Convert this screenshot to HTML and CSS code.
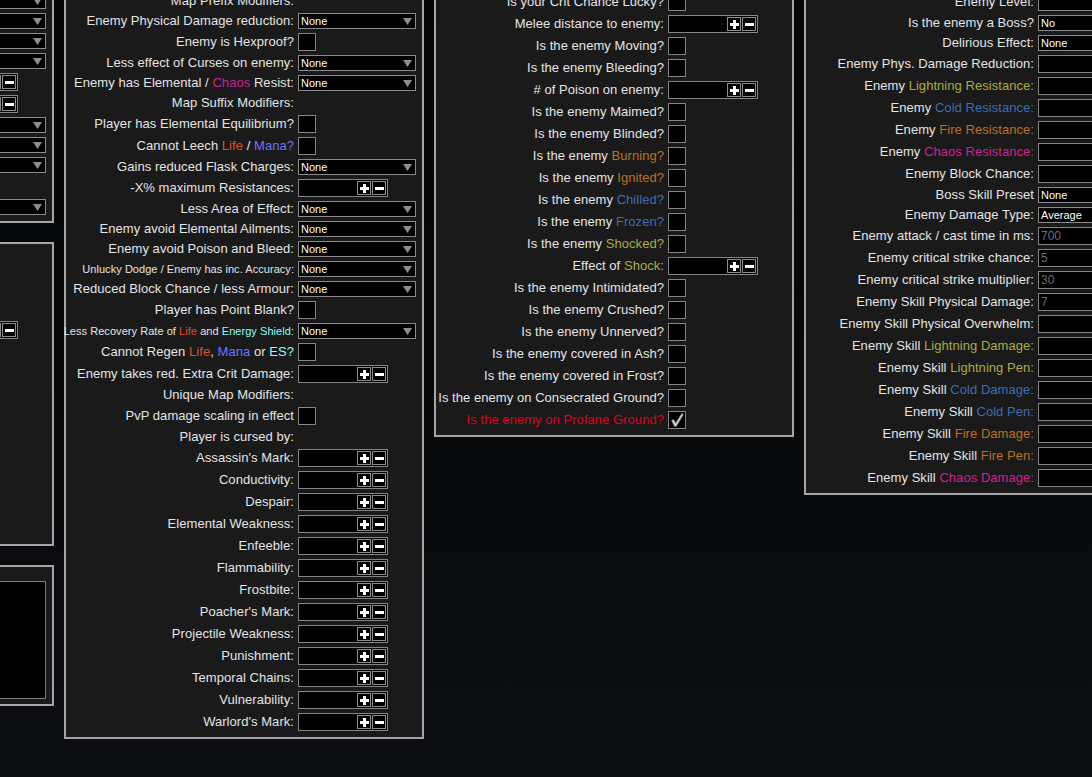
FILE: index.html
```html
<!DOCTYPE html>
<html>
<head>
<meta charset="utf-8">
<link rel="stylesheet" href="styles.css">
</head>
<body>
<div class="board">

  <!-- left column (mostly scrolled off to the left) -->
  <div class="col">
    <div class="panel">
      <div class="row"><div class="lab"></div><div class="dd"><span class="v"></span><svg class="arr" width="9" height="7"><path d="M0 0H9L4.5 7Z"/></svg></div></div>
      <div class="row"><div class="lab"></div><div class="dd"><span class="v"></span><svg class="arr" width="9" height="7"><path d="M0 0H9L4.5 7Z"/></svg></div></div>
      <div class="row"><div class="lab"></div><div class="dd"><span class="v"></span><svg class="arr" width="9" height="7"><path d="M0 0H9L4.5 7Z"/></svg></div></div>
      <div class="row"><div class="lab"></div><div class="dd"><span class="v"></span><svg class="arr" width="9" height="7"><path d="M0 0H9L4.5 7Z"/></svg></div></div>
      <div class="row"><div class="lab"></div><div class="ed"><span class="ph"></span><span class="pm"><svg width="9" height="9"><path d="M3 0h3v3h3v3H6v3H3V6H0V3h3z"/></svg></span><span class="pm"><svg width="9" height="9"><path d="M0 3h9v3H0z"/></svg></span></div></div>
      <div class="row"><div class="lab"></div><div class="ed"><span class="ph"></span><span class="pm"><svg width="9" height="9"><path d="M3 0h3v3h3v3H6v3H3V6H0V3h3z"/></svg></span><span class="pm"><svg width="9" height="9"><path d="M0 3h9v3H0z"/></svg></span></div></div>
      <div class="row"><div class="lab"></div><div class="dd"><span class="v"></span><svg class="arr" width="9" height="7"><path d="M0 0H9L4.5 7Z"/></svg></div></div>
      <div class="row"><div class="lab"></div><div class="dd"><span class="v"></span><svg class="arr" width="9" height="7"><path d="M0 0H9L4.5 7Z"/></svg></div></div>
      <div class="row"><div class="lab"></div><div class="dd"><span class="v"></span><svg class="arr" width="9" height="7"><path d="M0 0H9L4.5 7Z"/></svg></div></div>
      <div class="row"><div class="lab"></div><div class="cb"></div></div>
      <div class="row"><div class="lab"></div><div class="dd"><span class="v"></span><svg class="arr" width="9" height="7"><path d="M0 0H9L4.5 7Z"/></svg></div></div>
    </div>
    <div class="panel p2">
      <div class="row"><div class="lab"></div><div class="ed"><span class="ph"></span><span class="pm"><svg width="9" height="9"><path d="M3 0h3v3h3v3H6v3H3V6H0V3h3z"/></svg></span><span class="pm"><svg width="9" height="9"><path d="M0 3h9v3H0z"/></svg></span></div></div>
    </div>
    <div class="panel p3">
      <div class="listbox"></div>
    </div>
  </div>

  <!-- map modifiers / curses -->
  <div class="col">
    <div class="panel">
      <div class="row"><div class="lab"><span>Map Prefix Modifiers:</span></div></div>
      <div class="row"><div class="lab"><span>Enemy Physical Damage reduction:</span></div><div class="dd"><span class="v">None</span><svg class="arr" width="9" height="7"><path d="M0 0H9L4.5 7Z"/></svg></div></div>
      <div class="row"><div class="lab"><span>Enemy is Hexproof?</span></div><div class="cb"></div></div>
      <div class="row"><div class="lab"><span>Less effect of Curses on enemy:</span></div><div class="dd"><span class="v">None</span><svg class="arr" width="9" height="7"><path d="M0 0H9L4.5 7Z"/></svg></div></div>
      <div class="row"><div class="lab"><span>Enemy has Elemental / <span class="chaos">Chaos</span> Resist:</span></div><div class="dd"><span class="v">None</span><svg class="arr" width="9" height="7"><path d="M0 0H9L4.5 7Z"/></svg></div></div>
      <div class="row"><div class="lab"><span>Map Suffix Modifiers:</span></div></div>
      <div class="row"><div class="lab"><span>Player has Elemental Equilibrium?</span></div><div class="cb"></div></div>
      <div class="row"><div class="lab"><span>Cannot Leech <span class="life">Life</span> / <span class="mana">Mana?</span></span></div><div class="cb"></div></div>
      <div class="row"><div class="lab"><span>Gains reduced Flask Charges:</span></div><div class="dd"><span class="v">None</span><svg class="arr" width="9" height="7"><path d="M0 0H9L4.5 7Z"/></svg></div></div>
      <div class="row"><div class="lab"><span>-X% maximum Resistances:</span></div><div class="ed"><span class="ph"></span><span class="pm"><svg width="9" height="9"><path d="M3 0h3v3h3v3H6v3H3V6H0V3h3z"/></svg></span><span class="pm"><svg width="9" height="9"><path d="M0 3h9v3H0z"/></svg></span></div></div>
      <div class="row"><div class="lab"><span>Less Area of Effect:</span></div><div class="dd"><span class="v">None</span><svg class="arr" width="9" height="7"><path d="M0 0H9L4.5 7Z"/></svg></div></div>
      <div class="row"><div class="lab"><span>Enemy avoid Elemental Ailments:</span></div><div class="dd"><span class="v">None</span><svg class="arr" width="9" height="7"><path d="M0 0H9L4.5 7Z"/></svg></div></div>
      <div class="row"><div class="lab"><span>Enemy avoid Poison and Bleed:</span></div><div class="dd"><span class="v">None</span><svg class="arr" width="9" height="7"><path d="M0 0H9L4.5 7Z"/></svg></div></div>
      <div class="row"><div class="lab small"><span>Unlucky Dodge / Enemy has inc. Accuracy:</span></div><div class="dd"><span class="v">None</span><svg class="arr" width="9" height="7"><path d="M0 0H9L4.5 7Z"/></svg></div></div>
      <div class="row"><div class="lab"><span>Reduced Block Chance / less Armour:</span></div><div class="dd"><span class="v">None</span><svg class="arr" width="9" height="7"><path d="M0 0H9L4.5 7Z"/></svg></div></div>
      <div class="row"><div class="lab"><span>Player has Point Blank?</span></div><div class="cb"></div></div>
      <div class="row"><div class="lab small"><span>Less Recovery Rate of <span class="life">Life</span> and <span class="es">Energy Shield:</span></span></div><div class="dd"><span class="v">None</span><svg class="arr" width="9" height="7"><path d="M0 0H9L4.5 7Z"/></svg></div></div>
      <div class="row"><div class="lab"><span>Cannot Regen <span class="life">Life</span>, <span class="mana">Mana</span> or <span class="es">ES?</span></span></div><div class="cb"></div></div>
      <div class="row"><div class="lab"><span>Enemy takes red. Extra Crit Damage:</span></div><div class="ed"><span class="ph"></span><span class="pm"><svg width="9" height="9"><path d="M3 0h3v3h3v3H6v3H3V6H0V3h3z"/></svg></span><span class="pm"><svg width="9" height="9"><path d="M0 3h9v3H0z"/></svg></span></div></div>
      <div class="row"><div class="lab"><span>Unique Map Modifiers:</span></div></div>
      <div class="row"><div class="lab"><span>PvP damage scaling in effect</span></div><div class="cb"></div></div>
      <div class="row"><div class="lab"><span>Player is cursed by:</span></div></div>
      <div class="row"><div class="lab"><span>Assassin's Mark:</span></div><div class="ed"><span class="ph"></span><span class="pm"><svg width="9" height="9"><path d="M3 0h3v3h3v3H6v3H3V6H0V3h3z"/></svg></span><span class="pm"><svg width="9" height="9"><path d="M0 3h9v3H0z"/></svg></span></div></div>
      <div class="row"><div class="lab"><span>Conductivity:</span></div><div class="ed"><span class="ph"></span><span class="pm"><svg width="9" height="9"><path d="M3 0h3v3h3v3H6v3H3V6H0V3h3z"/></svg></span><span class="pm"><svg width="9" height="9"><path d="M0 3h9v3H0z"/></svg></span></div></div>
      <div class="row"><div class="lab"><span>Despair:</span></div><div class="ed"><span class="ph"></span><span class="pm"><svg width="9" height="9"><path d="M3 0h3v3h3v3H6v3H3V6H0V3h3z"/></svg></span><span class="pm"><svg width="9" height="9"><path d="M0 3h9v3H0z"/></svg></span></div></div>
      <div class="row"><div class="lab"><span>Elemental Weakness:</span></div><div class="ed"><span class="ph"></span><span class="pm"><svg width="9" height="9"><path d="M3 0h3v3h3v3H6v3H3V6H0V3h3z"/></svg></span><span class="pm"><svg width="9" height="9"><path d="M0 3h9v3H0z"/></svg></span></div></div>
      <div class="row"><div class="lab"><span>Enfeeble:</span></div><div class="ed"><span class="ph"></span><span class="pm"><svg width="9" height="9"><path d="M3 0h3v3h3v3H6v3H3V6H0V3h3z"/></svg></span><span class="pm"><svg width="9" height="9"><path d="M0 3h9v3H0z"/></svg></span></div></div>
      <div class="row"><div class="lab"><span>Flammability:</span></div><div class="ed"><span class="ph"></span><span class="pm"><svg width="9" height="9"><path d="M3 0h3v3h3v3H6v3H3V6H0V3h3z"/></svg></span><span class="pm"><svg width="9" height="9"><path d="M0 3h9v3H0z"/></svg></span></div></div>
      <div class="row"><div class="lab"><span>Frostbite:</span></div><div class="ed"><span class="ph"></span><span class="pm"><svg width="9" height="9"><path d="M3 0h3v3h3v3H6v3H3V6H0V3h3z"/></svg></span><span class="pm"><svg width="9" height="9"><path d="M0 3h9v3H0z"/></svg></span></div></div>
      <div class="row"><div class="lab"><span>Poacher's Mark:</span></div><div class="ed"><span class="ph"></span><span class="pm"><svg width="9" height="9"><path d="M3 0h3v3h3v3H6v3H3V6H0V3h3z"/></svg></span><span class="pm"><svg width="9" height="9"><path d="M0 3h9v3H0z"/></svg></span></div></div>
      <div class="row"><div class="lab"><span>Projectile Weakness:</span></div><div class="ed"><span class="ph"></span><span class="pm"><svg width="9" height="9"><path d="M3 0h3v3h3v3H6v3H3V6H0V3h3z"/></svg></span><span class="pm"><svg width="9" height="9"><path d="M0 3h9v3H0z"/></svg></span></div></div>
      <div class="row"><div class="lab"><span>Punishment:</span></div><div class="ed"><span class="ph"></span><span class="pm"><svg width="9" height="9"><path d="M3 0h3v3h3v3H6v3H3V6H0V3h3z"/></svg></span><span class="pm"><svg width="9" height="9"><path d="M0 3h9v3H0z"/></svg></span></div></div>
      <div class="row"><div class="lab"><span>Temporal Chains:</span></div><div class="ed"><span class="ph"></span><span class="pm"><svg width="9" height="9"><path d="M3 0h3v3h3v3H6v3H3V6H0V3h3z"/></svg></span><span class="pm"><svg width="9" height="9"><path d="M0 3h9v3H0z"/></svg></span></div></div>
      <div class="row"><div class="lab"><span>Vulnerability:</span></div><div class="ed"><span class="ph"></span><span class="pm"><svg width="9" height="9"><path d="M3 0h3v3h3v3H6v3H3V6H0V3h3z"/></svg></span><span class="pm"><svg width="9" height="9"><path d="M0 3h9v3H0z"/></svg></span></div></div>
      <div class="row"><div class="lab"><span>Warlord's Mark:</span></div><div class="ed"><span class="ph"></span><span class="pm"><svg width="9" height="9"><path d="M3 0h3v3h3v3H6v3H3V6H0V3h3z"/></svg></span><span class="pm"><svg width="9" height="9"><path d="M0 3h9v3H0z"/></svg></span></div></div>
    </div>
  </div>

  <!-- enemy state -->
  <div class="col">
    <div class="panel">
      <div class="row"><div class="lab"><span>Is your Crit Chance Lucky?</span></div><div class="cb"></div></div>
      <div class="row"><div class="lab"><span>Melee distance to enemy:</span></div><div class="ed"><span class="ph"></span><span class="pm"><svg width="9" height="9"><path d="M3 0h3v3h3v3H6v3H3V6H0V3h3z"/></svg></span><span class="pm"><svg width="9" height="9"><path d="M0 3h9v3H0z"/></svg></span></div></div>
      <div class="row"><div class="lab"><span>Is the enemy Moving?</span></div><div class="cb"></div></div>
      <div class="row"><div class="lab"><span>Is the enemy Bleeding?</span></div><div class="cb"></div></div>
      <div class="row"><div class="lab"><span># of Poison on enemy:</span></div><div class="ed"><span class="ph"></span><span class="pm"><svg width="9" height="9"><path d="M3 0h3v3h3v3H6v3H3V6H0V3h3z"/></svg></span><span class="pm"><svg width="9" height="9"><path d="M0 3h9v3H0z"/></svg></span></div></div>
      <div class="row"><div class="lab"><span>Is the enemy Maimed?</span></div><div class="cb"></div></div>
      <div class="row"><div class="lab"><span>Is the enemy Blinded?</span></div><div class="cb"></div></div>
      <div class="row"><div class="lab"><span>Is the enemy <span class="fire">Burning?</span></span></div><div class="cb"></div></div>
      <div class="row"><div class="lab"><span>Is the enemy <span class="fire">Ignited?</span></span></div><div class="cb"></div></div>
      <div class="row"><div class="lab"><span>Is the enemy <span class="cold">Chilled?</span></span></div><div class="cb"></div></div>
      <div class="row"><div class="lab"><span>Is the enemy <span class="cold">Frozen?</span></span></div><div class="cb"></div></div>
      <div class="row"><div class="lab"><span>Is the enemy <span class="ltn">Shocked?</span></span></div><div class="cb"></div></div>
      <div class="row"><div class="lab"><span>Effect of <span class="ltn">Shock:</span></span></div><div class="ed"><span class="ph"></span><span class="pm"><svg width="9" height="9"><path d="M3 0h3v3h3v3H6v3H3V6H0V3h3z"/></svg></span><span class="pm"><svg width="9" height="9"><path d="M0 3h9v3H0z"/></svg></span></div></div>
      <div class="row"><div class="lab"><span>Is the enemy Intimidated?</span></div><div class="cb"></div></div>
      <div class="row"><div class="lab"><span>Is the enemy Crushed?</span></div><div class="cb"></div></div>
      <div class="row"><div class="lab"><span>Is the enemy Unnerved?</span></div><div class="cb"></div></div>
      <div class="row"><div class="lab"><span>Is the enemy covered in Ash?</span></div><div class="cb"></div></div>
      <div class="row"><div class="lab"><span>Is the enemy covered in Frost?</span></div><div class="cb"></div></div>
      <div class="row"><div class="lab"><span>Is the enemy on Consecrated Ground?</span></div><div class="cb"></div></div>
      <div class="row"><div class="lab"><span class="neg">Is the enemy on Profane Ground?</span></div><div class="cb on"><svg width="16" height="16" viewBox="0 0 16 16"><path d="M2.5 8.5 L4.6 7.4 L6.6 11.2 L12.8 1.6 L14.4 2.6 L7.2 14.6 L5.6 14.6 Z"/></svg></div></div>
    </div>
  </div>

  <!-- enemy stats -->
  <div class="col">
    <div class="panel">
      <div class="row"><div class="lab"><span>Enemy Level:</span></div><div class="ed wide"><span class="ph"></span></div></div>
      <div class="row"><div class="lab"><span>Is the enemy a Boss?</span></div><div class="dd"><span class="v">No</span><svg class="arr" width="9" height="7"><path d="M0 0H9L4.5 7Z"/></svg></div></div>
      <div class="row"><div class="lab"><span>Delirious Effect:</span></div><div class="dd"><span class="v">None</span><svg class="arr" width="9" height="7"><path d="M0 0H9L4.5 7Z"/></svg></div></div>
      <div class="row"><div class="lab"><span>Enemy Phys. Damage Reduction:</span></div><div class="ed wide"><span class="ph"></span></div></div>
      <div class="row"><div class="lab"><span>Enemy <span class="ltn">Lightning Resistance:</span></span></div><div class="ed wide"><span class="ph"></span></div></div>
      <div class="row"><div class="lab"><span>Enemy <span class="cold">Cold Resistance:</span></span></div><div class="ed wide"><span class="ph"></span></div></div>
      <div class="row"><div class="lab"><span>Enemy <span class="fire">Fire Resistance:</span></span></div><div class="ed wide"><span class="ph"></span></div></div>
      <div class="row"><div class="lab"><span>Enemy <span class="chaos">Chaos Resistance:</span></span></div><div class="ed wide"><span class="ph"></span></div></div>
      <div class="row"><div class="lab"><span>Enemy Block Chance:</span></div><div class="ed wide"><span class="ph"></span></div></div>
      <div class="row"><div class="lab"><span>Boss Skill Preset</span></div><div class="dd"><span class="v">None</span><svg class="arr" width="9" height="7"><path d="M0 0H9L4.5 7Z"/></svg></div></div>
      <div class="row"><div class="lab"><span>Enemy Damage Type:</span></div><div class="dd"><span class="v">Average</span><svg class="arr" width="9" height="7"><path d="M0 0H9L4.5 7Z"/></svg></div></div>
      <div class="row"><div class="lab"><span>Enemy attack / cast time in ms:</span></div><div class="ed wide"><span class="ph">700</span></div></div>
      <div class="row"><div class="lab"><span>Enemy critical strike chance:</span></div><div class="ed wide"><span class="ph">5</span></div></div>
      <div class="row"><div class="lab"><span>Enemy critical strike multiplier:</span></div><div class="ed wide"><span class="ph">30</span></div></div>
      <div class="row"><div class="lab"><span>Enemy Skill Physical Damage:</span></div><div class="ed wide"><span class="ph">7</span></div></div>
      <div class="row"><div class="lab"><span>Enemy Skill Physical Overwhelm:</span></div><div class="ed wide"><span class="ph"></span></div></div>
      <div class="row"><div class="lab"><span>Enemy Skill <span class="ltn">Lightning Damage:</span></span></div><div class="ed wide"><span class="ph"></span></div></div>
      <div class="row"><div class="lab"><span>Enemy Skill <span class="ltn">Lightning Pen:</span></span></div><div class="ed wide"><span class="ph"></span></div></div>
      <div class="row"><div class="lab"><span>Enemy Skill <span class="cold">Cold Damage:</span></span></div><div class="ed wide"><span class="ph"></span></div></div>
      <div class="row"><div class="lab"><span>Enemy Skill <span class="cold">Cold Pen:</span></span></div><div class="ed wide"><span class="ph"></span></div></div>
      <div class="row"><div class="lab"><span>Enemy Skill <span class="fire">Fire Damage:</span></span></div><div class="ed wide"><span class="ph"></span></div></div>
      <div class="row"><div class="lab"><span>Enemy Skill <span class="fire">Fire Pen:</span></span></div><div class="ed wide"><span class="ph"></span></div></div>
      <div class="row"><div class="lab"><span>Enemy Skill <span class="chaos">Chaos Damage:</span></span></div><div class="ed wide"><span class="ph"></span></div></div>
    </div>
  </div>

</div>
</body>
</html>
```

FILE: styles.css
```css
html, body {
  margin: 0;
  padding: 0;
}

body {
  width: 1092px;
  height: 777px;
  overflow: hidden;
  background: linear-gradient(180deg, #050506 0%, #08090b 55%, #0c0e12 100%);
  font-family: "Liberation Sans", Arial, sans-serif;
  color: #e4e4e4;
}

.board {
  display: flex;
  align-items: flex-start;
  gap: 10px;
  margin-left: -306px;
  margin-top: -15px;
}

.col {
  flex: none;
  width: 360px;
  display: flex;
  flex-direction: column;
  gap: 19px;
}

.panel {
  box-sizing: border-box;
  border: 2px solid #a6a6a6;
  background: #1a1a1a;
  padding: 6px;
  display: flex;
  flex-direction: column;
  gap: 4px;
}

.panel.p2 {
  height: 304px;
  padding-top: 77px;
}

.panel.p3 {
  height: 141px;
  padding: 14px 6px 5px 6px;
}

.listbox {
  box-sizing: border-box;
  height: 118px;
  border: 1px solid #7c7c7c;
  background: #000;
}

.row {
  display: grid;
  grid-template-columns: minmax(0, 1fr) 118px;
  column-gap: 4px;
  align-items: center;
}

.lab {
  display: flex;
  justify-content: flex-end;
  white-space: nowrap;
  font-size: 13px;
  line-height: 16px;
  height: 16px;
  min-width: 0;
  letter-spacing: 0.05px;
}

.lab.small {
  font-size: 11px;
}

/* dropdown */
.dd {
  box-sizing: border-box;
  width: 118px;
  height: 16px;
  border: 1px solid #8a8a8a;
  background: #000;
  display: flex;
  align-items: center;
  padding: 0 3px 0 2px;
  font-size: 11px;
  line-height: 14px;
  color: #fff;
}

.dd .v {
  flex: 1;
}

.arr {
  display: block;
  fill: #8e8e8e;
}

/* checkbox */
.cb {
  box-sizing: border-box;
  width: 18px;
  height: 18px;
  border: 1px solid #848484;
  background: #000;
  display: flex;
  align-items: center;
  justify-content: center;
}

.cb svg {
  display: block;
  fill: #d4d4d4;
  stroke: #7a7a7a;
  stroke-width: 0.6;
}

/* numeric edit */
.ed {
  box-sizing: border-box;
  width: 90px;
  height: 18px;
  border: 1px solid #848484;
  background: #000;
  display: flex;
  align-items: center;
  gap: 1px;
  padding: 0 1px;
  font-size: 12px;
  line-height: 14px;
}

.ed .ph {
  flex: 1;
  padding-left: 1px;
  color: #6e6e6e;
}

.pm {
  box-sizing: border-box;
  width: 14px;
  height: 14px;
  border: 1px solid #8c8c8c;
  background: #000;
  display: flex;
  align-items: center;
  justify-content: center;
}

.pm svg {
  display: block;
  fill: #ffffff;
}

/* colour codes */
.chaos { color: #d02090; }
.life  { color: #e05030; }
.mana  { color: #7070ff; }
.es    { color: #88ffff; }
.fire  { color: #b97123; }
.cold  { color: #3f6db3; }
.ltn   { color: #adaa47; }
.neg   { color: #dd0022; }
```
